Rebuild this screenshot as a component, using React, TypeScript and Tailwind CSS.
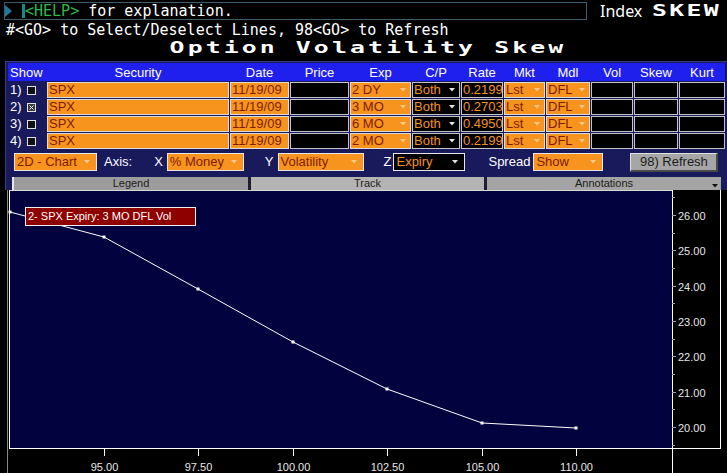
import React from "react";

const ui = "font-['Liberation_Sans',Arial,sans-serif]";
const mono = "font-['DejaVu_Sans_Mono','Liberation_Mono',monospace]";
const grid =
  "grid grid-cols-[38px_182px_59px_59px_61px_48px_42px_41px_44px_42px_44px_46px] gap-x-px";

const headers = ["Security", "Date", "Price", "Exp", "C/P", "Rate", "Mkt", "Mdl", "Vol", "Skew", "Kurt"];

const rows = [
  { n: "1)", checked: false, exp: "2 DY", rate: "0.2199" },
  { n: "2)", checked: true, exp: "3 MO", rate: "0.2703" },
  { n: "3)", checked: false, exp: "6 MO", rate: "0.4950" },
  { n: "4)", checked: false, exp: "2 MO", rate: "0.2199" },
];

// chart coords are relative to the chart svg (page x - 7, page y - 190)
const pts = [
  [3, 22],
  [97, 47],
  [191, 99],
  [286, 152],
  [380, 199],
  [475, 233],
  [569, 238],
];
const xLabels = ["95.00", "97.50", "100.00", "102.50", "105.00", "110.00"];
const yOf = (v: number) => 25 + (26 - v) * 35.33;

function Arrow({ light }: { light?: boolean }) {
  return (
    <svg width="6" height="4" viewBox="0 0 6 4" className="shrink-0">
      <polygon points="0,0 6,0 3,3.5" fill={light ? "#e4e4e4" : "#fcc98a"} />
    </svg>
  );
}

function Check({ on }: { on: boolean }) {
  return (
    <svg width="9" height="9" viewBox="0 0 9 9" className="ml-[5px]">
      <rect x="0.5" y="0.5" width="8" height="8" fill={on ? "#3a3a3a" : "#111"} stroke="#e2e2e2" />
      {on && <path d="M2.5 2.5 L6.5 6.5 M6.5 2.5 L2.5 6.5" stroke="#f0f0f0" strokeWidth="1" />}
    </svg>
  );
}

function Orange({ children, arrow, className = "" }: { children?: React.ReactNode; arrow?: boolean; className?: string }) {
  return (
    <div
      className={`h-[16px] bg-[#f7941d] border border-[#dcdcdc] text-[#7d1d00] text-[13px] leading-[14px] pl-px pr-[4px] flex items-center justify-between ${className}`}
    >
      <span>{children}</span>
      {arrow && <Arrow />}
    </div>
  );
}

function Dark({ children, arrow, className = "" }: { children?: React.ReactNode; arrow?: boolean; className?: string }) {
  return (
    <div
      className={`h-[16px] bg-black border border-[#c4c4c4] text-[#f29320] text-[13px] leading-[14px] pl-px pr-[4px] flex items-center justify-between ${className}`}
    >
      <span>{children}</span>
      {arrow && <Arrow light />}
    </div>
  );
}

function Drop({ label, w, dark }: { label: string; w: string; dark?: boolean }) {
  return (
    <div
      className={`${w} h-[18px] border border-[#e6e6e6] text-[13px] leading-[14px] pl-[2px] pr-[6px] flex items-center justify-between ${
        dark ? "bg-black text-[#f29320]" : "bg-[#f7941d] text-[#7d1d00]"
      }`}
    >
      <span>{label}</span>
      <Arrow light={dark} />
    </div>
  );
}

export default function App() {
  return (
    <div className={`w-[727px] h-[473px] bg-black overflow-hidden text-white ${ui}`}>
      {/* command line */}
      <div className="h-[21px] flex items-start">
        <div className={`ml-[4px] mt-[2px] w-[583px] h-[18px] border border-[#3d5c6c] flex items-center ${mono} text-[15px]`}>
          <svg width="20" height="14" viewBox="0 0 20 14" className="shrink-0">
            <polygon points="0,1 7,7 0,13" fill="#1f7a9a" />
            <rect x="17" y="0" width="3" height="14" fill="#168888" />
          </svg>
          <span className="text-[#2fb84b] leading-none">&lt;HELP&gt;</span>
          <span className="leading-none">&nbsp;for explanation.</span>
        </div>
        <span className="ml-[13px] mt-[2px] text-[16px] leading-[18px] font-['Noto_Sans',sans-serif]">Index</span>
        <span className={`ml-[10px] mt-[3px] inline-block origin-left scale-x-[1.55] font-bold text-[16px] leading-[16px] tracking-[1.5px] ${mono}`}>
          SKEW
        </span>
      </div>

      <div className={`h-[18px] pl-[6px] ${mono} text-[15px] leading-[18px]`}>
        #&lt;GO&gt; to Select/Deselect Lines, 98&lt;GO&gt; to Refresh
      </div>

      <div className="h-[18px] flex justify-center items-center pl-[8px]">
        <span className={`inline-block scale-x-[1.55] font-bold text-[16px] leading-none tracking-[2px] ${mono}`}>
          Option Volatility Skew
        </span>
      </div>

      {/* security panel */}
      <div className="mt-[4px] ml-[5px] bg-[#191a5c] border-l border-t border-[#3c3c86] pt-px pl-[2px]">
        <div className={`${grid} h-[18px] bg-[#2020ee] w-[717px] text-[13px] items-center`}>
          <span className="pl-[2px]">Show</span>
          {headers.map((h) => (
            <span key={h} className="text-center">
              {h}
            </span>
          ))}
        </div>

        <div className={`${grid} gap-y-px mt-px`}>
          {rows.map((r) => (
            <React.Fragment key={r.n}>
              <div className="h-[16px] flex items-center pl-[2px] text-[13px]">
                <span>{r.n}</span>
                <Check on={r.checked} />
              </div>
              <Orange>SPX</Orange>
              <Orange>11/19/09</Orange>
              <Dark />
              <Orange arrow>{r.exp}</Orange>
              <Dark arrow>Both</Dark>
              <Dark className="pr-0">{r.rate}</Dark>
              <Orange arrow>Lst</Orange>
              <Orange arrow>DFL</Orange>
              <Dark />
              <Dark />
              <Dark />
            </React.Fragment>
          ))}
        </div>

        {/* chart controls */}
        <div className="mt-[4px] h-[18px] flex items-center pl-[6px] text-[13px]">
          <Drop label="2D - Chart" w="w-[83px]" />
          <span className="ml-[7px]">Axis:</span>
          <span className="ml-[22px]">X</span>
          <div className="ml-[4px]">
            <Drop label="% Money" w="w-[77px]" />
          </div>
          <span className="ml-[21px]">Y</span>
          <div className="ml-[4px]">
            <Drop label="Volatility" w="w-[86px]" />
          </div>
          <span className="ml-[20px]">Z</span>
          <div className="ml-[2px]">
            <Drop label="Expiry" w="w-[72px]" dark />
          </div>
          <span className="ml-[23px]">Spread</span>
          <div className="ml-[3px]">
            <Drop label="Show" w="w-[70px]" />
          </div>
          <button className="ml-[27px] w-[88px] h-[19px] bg-[#a6a6a6] border-t border-l border-[#e0e0e0] border-r-2 border-b-2 border-r-[#4a4a4a] border-b-[#4a4a4a] text-[#1c1c1c] text-[13px] leading-[14px] text-center">
            98) Refresh
          </button>
        </div>

        {/* tabs */}
        <div className="mt-[6px] h-[13px] flex gap-px pl-[4px] text-[11px] leading-[13px] text-[#1c1c1c]">
          <div className="w-[236px] bg-[#9c9c9c] border-l-2 border-[#e8e8e8] text-center">Legend</div>
          <div className="w-[235px] bg-[#b4b4b4] border-l-2 border-[#202020] text-center">Track</div>
          <div className="w-[236px] bg-[#a4a4a4] border-l-2 border-[#202020] relative text-center">
            Annotations
            <svg width="6" height="4" viewBox="0 0 6 4" className="absolute right-[3px] bottom-[2px]">
              <polygon points="0,0 6,0 3,3.5" fill="#111" />
            </svg>
          </div>
        </div>
      </div>

      {/* chart */}
      <div className="relative h-[283px] pl-[7px]">
        <svg width="720" height="283" viewBox="0 0 720 283" className={`block ${ui}`}>
          <line x1="0.5" y1="0" x2="0.5" y2="283" stroke="#8a8a8a" />
          <rect x="3" y="0" width="662" height="258" fill="#02023e" />
          <line x1="2.5" y1="0" x2="2.5" y2="258" stroke="#fff" />
          <line x1="2" y1="0.5" x2="665" y2="0.5" stroke="#d8d8d8" />
          <line x1="2" y1="258.5" x2="714" y2="258.5" stroke="#fff" />
          <line x1="665.5" y1="0" x2="665.5" y2="283" stroke="#fff" />
          <line x1="713.5" y1="0" x2="713.5" y2="259" stroke="#fff" />

          {Array.from({ length: 15 }, (_, i) => {
            const v = 26.5 - i * 0.5;
            const y = Math.round(yOf(v)) + 0.5;
            const major = Number.isInteger(v) && v <= 26 && v >= 20;
            return (
              <g key={i}>
                <line x1="665" y1={y} x2={major ? 669 : 668} y2={y} stroke="#a0a0b0" />
                {major && (
                  <text x="671" y={y + 4} fontSize="11" fill="#e6e6e6">
                    {v.toFixed(2)}
                  </text>
                )}
              </g>
            );
          })}

          {xLabels.map((l, i) => {
            const x = pts[i + 1][0] + 0.5;
            return (
              <g key={l}>
                <line x1={x} y1="259" x2={x} y2="266" stroke="#fff" />
                <text x={x} y="281" fontSize="11" fill="#e6e6e6" textAnchor="middle">
                  {l}
                </text>
              </g>
            );
          })}

          <polyline points={pts.map((p) => p.join(",")).join(" ")} fill="none" stroke="#fff" strokeWidth="1" />
          {pts.map(([x, y], i) => (
            <rect key={i} x={x - 1.5} y={y - 1.5} width="3" height="3" fill="#fff" />
          ))}
        </svg>

        <div className="absolute left-[25px] top-[17px] w-[171px] h-[19px] bg-[#8e0000] border border-[#f0f0f0] text-[11px] leading-[17px] pl-[2px] text-white">
          2- SPX Expiry: 3 MO DFL Vol
        </div>
      </div>
    </div>
  );
}
